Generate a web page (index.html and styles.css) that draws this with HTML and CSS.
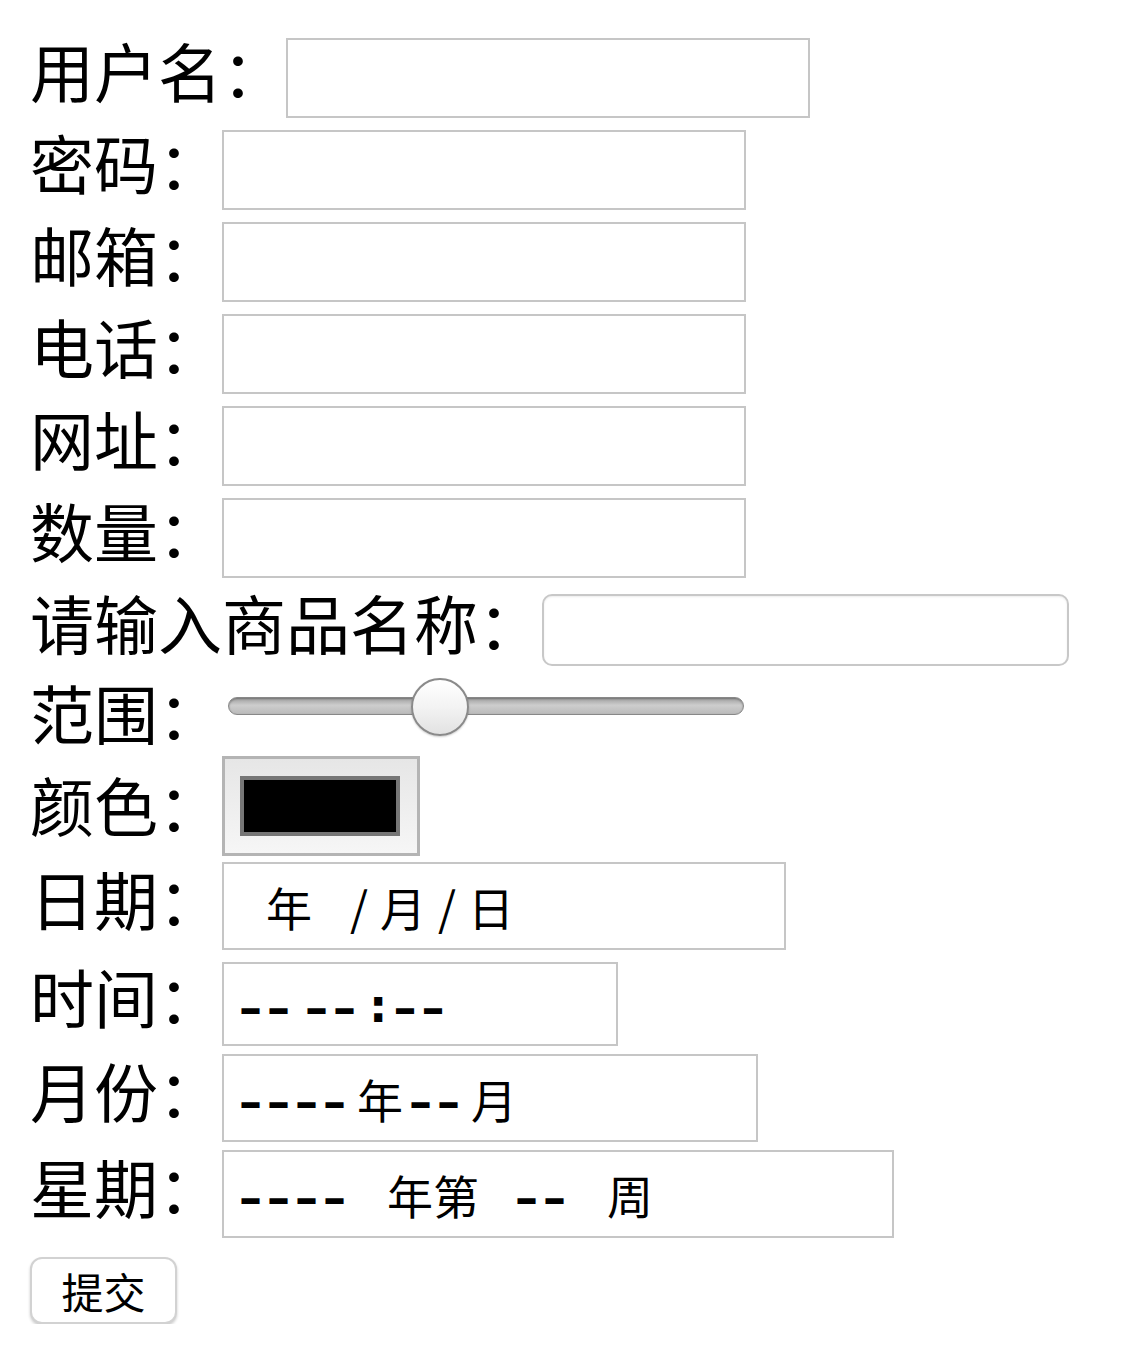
FILE: index.html
```html
<!DOCTYPE html>
<html lang="zh-CN">

<head>
    <meta charset="UTF-8">
    <meta name="viewport" content="width=device-width, initial-scale=1.0">
    <title>表单</title>
    <link rel="stylesheet" href="styles.css">
</head>

<body>
    <form class="form" action="#">
        <div class="row">
            <label class="label" for="user">用户名：</label>
            <input class="text" type="text" id="user">
        </div>
        <div class="row">
            <label class="label" for="pwd">密码：</label>
            <input class="text" type="password" id="pwd">
        </div>
        <div class="row">
            <label class="label" for="mail">邮箱：</label>
            <input class="text" type="text" id="mail">
        </div>
        <div class="row">
            <label class="label" for="tel">电话：</label>
            <input class="text" type="text" id="tel">
        </div>
        <div class="row">
            <label class="label" for="url">网址：</label>
            <input class="text" type="text" id="url">
        </div>
        <div class="row">
            <label class="label" for="num">数量：</label>
            <input class="text" type="text" id="num">
        </div>
        <div class="row row_search">
            <label class="label" for="goods">请输入商品名称：</label>
            <input class="search" type="text" id="goods">
        </div>
        <div class="row row_range">
            <label class="label label_low" for="range">范围：</label>
            <input class="range" type="range" id="range" min="0" max="100" value="40">
        </div>
        <div class="row row_color">
            <label class="label label_mid" for="color">颜色：</label>
            <input class="color" type="color" id="color" value="#000000">
        </div>
        <div class="row row_date">
            <label class="label">日期：</label>
            <div class="field field_date">
                <span class="cn">年</span><span class="cn parts">/月/日</span>
            </div>
        </div>
        <div class="row row_time">
            <label class="label">时间：</label>
            <div class="field field_time">
                <span class="dash">––</span><span class="dash gap_s">––</span><span class="colon">:</span><span class="dash">––</span>
            </div>
        </div>
        <div class="row row_month">
            <label class="label">月份：</label>
            <div class="field field_month">
                <span class="dash">––––</span><span class="cn gap_y">年</span><span class="dash gap_m">––</span><span class="cn gap_y">月</span>
            </div>
        </div>
        <div class="row row_week">
            <label class="label">星期：</label>
            <div class="field field_week">
                <span class="dash">––––</span><span class="cn gap">年第</span><span class="dash gap">––</span><span class="cn gap">周</span>
            </div>
        </div>
        <div class="row_btn">
            <button class="submit" type="submit">提交</button>
        </div>
    </form>
</body>

</html>
```
FILE: styles.css
```css
body {
    margin: 0;
    background: #fff;
    color: #000;
    font-family: "Noto Sans CJK SC", sans-serif;
}

.form {
    display: flex;
    flex-direction: column;
    padding: 38px 0 0 30px;
}

.row {
    display: flex;
    align-items: center;
    height: 80px;
}

.row + .row {
    margin-top: 12px;
}

.label {
    font-size: 64px;
    line-height: 64px;
    margin-bottom: 18px;
    white-space: nowrap;
}

.label_low {
    margin-bottom: 0;
    margin-top: 10px;
}

.label_mid {
    margin-bottom: 6px;
}

.text {
    box-sizing: border-box;
    width: 524px;
    height: 80px;
    margin: 0;
    border: 2px solid #c6c6c6;
    outline: none;
}

/* search box */
.row_search {
    height: 72px;
}

.row + .row_search {
    margin-top: 16px;
}

.search {
    box-sizing: border-box;
    width: 527px;
    height: 72px;
    margin: 0;
    border: 2px solid #c8c8c8;
    border-radius: 10px;
    box-shadow: inset 0 1px 2px rgba(0, 0, 0, 0.08);
    outline: none;
}

/* range */
.row_range {
    height: 58px;
}

.row + .row_range {
    margin-top: 11px;
}

.range {
    -webkit-appearance: none;
    appearance: none;
    width: 516px;
    height: 58px;
    margin: 0 0 0 6px;
    padding: 0;
    background: transparent;
}

.range::-webkit-slider-runnable-track {
    height: 18px;
    border: 1px solid #888;
    border-radius: 10px;
    background: linear-gradient(#9f9f9f, #cdcdcd 45%, #bababa);
    box-shadow: inset 0 1px 2px rgba(0, 0, 0, 0.3);
}

.range::-webkit-slider-thumb {
    -webkit-appearance: none;
    width: 58px;
    height: 58px;
    margin-top: -20px;
    border: 2px solid #8a8a8a;
    border-radius: 50%;
    box-sizing: border-box;
    background: linear-gradient(#ffffff, #f3f3f3 50%, #e2e2e2);
    box-shadow: 0 1px 2px rgba(0, 0, 0, 0.2);
}

/* color */
.row_color {
    height: 100px;
}

.row + .row_color {
    margin-top: 21px;
}

.color {
    -webkit-appearance: none;
    appearance: none;
    box-sizing: border-box;
    width: 198px;
    height: 100px;
    margin: 0;
    padding: 17px 17px 17px 15px;
    border: 3px solid #b4b4b4;
    background: linear-gradient(#e6e6e6, #f6f6f6);
    cursor: pointer;
}

.color::-webkit-color-swatch-wrapper {
    padding: 0;
}

.color::-webkit-color-swatch {
    border: 4px solid #767676;
    border-radius: 0;
}

/* date, time, month, week */
.field {
    box-sizing: border-box;
    display: flex;
    align-items: center;
    height: 88px;
    padding-left: 15px;
    border: 2px solid #c6c6c6;
    font-size: 46px;
}

.field .cn {
    font-family: "Noto Sans CJK SC", sans-serif;
    line-height: 1;
}

.field .dash,
.field .colon {
    font-family: "DejaVu Sans", sans-serif;
    font-weight: bold;
    line-height: 1;
    letter-spacing: 5px;
}

.field .dash {
    margin-top: 8px;
}

.field .colon {
    margin: 4px 6px 0 8px;
    letter-spacing: 0;
}

.gap {
    margin-left: 36px;
}

.gap_s {
    margin-left: 10px;
}

.gap_m {
    margin-left: 6px;
}

.gap_y {
    margin-left: 6px;
}

.row_date,
.row_month,
.row_week {
    height: 88px;
}

.row + .row_date {
    margin-top: 6px;
}

.row + .row_month,
.row + .row_week {
    margin-top: 8px;
}

.field_date {
    width: 564px;
    padding-left: 42px;
}

.field_date .parts {
    margin-left: 38px;
    letter-spacing: 12px;
}

.row_time {
    height: 84px;
}

.row + .row_time {
    margin-top: 12px;
}

.field_time {
    width: 396px;
    height: 84px;
}

.field_month {
    width: 536px;
}

.field_week {
    width: 672px;
}

/* submit */
.row_btn {
    margin-top: 19px;
}

.submit {
    width: 147px;
    height: 67px;
    padding: 0;
    border: 2px solid #d2d2d2;
    border-radius: 12px;
    background: #fff;
    box-shadow: 0 2px 3px rgba(0, 0, 0, 0.2);
    font-family: "Noto Sans CJK SC", sans-serif;
    font-size: 42px;
    color: #000;
    cursor: pointer;
}
```
